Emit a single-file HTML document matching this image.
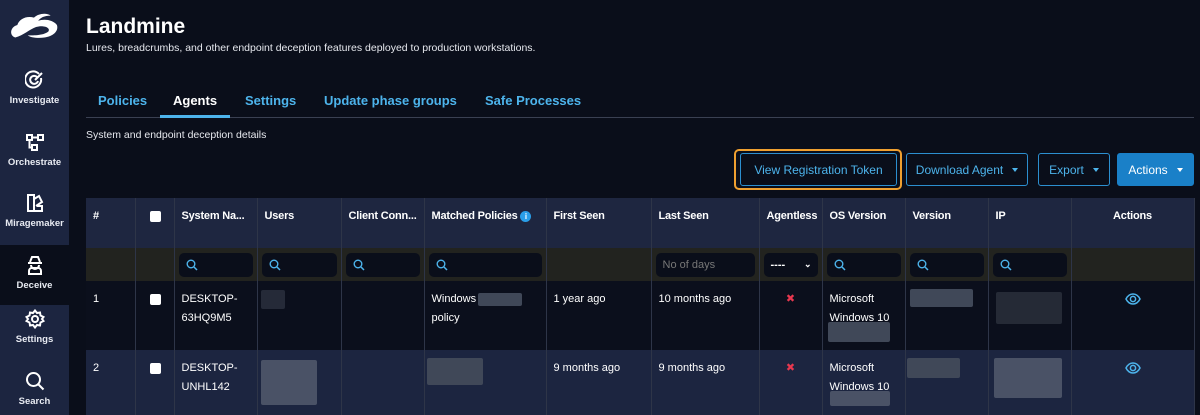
<!DOCTYPE html>
<html><head><meta charset="utf-8"><style>
*{box-sizing:border-box;margin:0;padding:0}
body{width:1200px;height:415px;overflow:hidden;background:#0a0e1a;font-family:"Liberation Sans",sans-serif;color:#fff;position:relative}
.sb{position:absolute;left:0;top:0;width:69px;height:415px;background:#1c2540}
.it{position:absolute;left:0;width:69px;text-align:center;font-size:9.5px;font-weight:bold;color:#e8ebf2}
.it svg{display:block;margin:0 auto 5px}
.sel{background:#0a0e1a}
h1{position:absolute;left:86px;top:15px;font-size:21px;font-weight:bold}
.sub{position:absolute;left:86px;top:42px;font-size:10.5px;color:#e6e8ee}
.tabs{position:absolute;left:86px;top:93px;width:1108px;height:25px;border-bottom:1px solid #3a4052}
.tab{position:absolute;top:0;font-size:13px;font-weight:bold;color:#4db4ec}
.desc{position:absolute;left:86px;top:129px;font-size:10.5px;color:#e6e8ee}
.btn{position:absolute;top:153px;height:33px;border:1.5px solid #2c8fd0;border-radius:3px;color:#4db4ec;font-size:12px;display:flex;align-items:center;justify-content:center}
.caret{display:inline-block;margin-left:9px;border-left:3.5px solid transparent;border-right:3.5px solid transparent;border-top:4px solid currentColor}
table{position:absolute;left:86px;top:198px;width:1108px;border-collapse:collapse;table-layout:fixed;font-size:11px}
td,th{border-right:1px solid #2e3548;vertical-align:top;text-align:left;padding:12px 7px 0;font-weight:bold}
th{height:50px;background:#1e2640;font-weight:bold;white-space:nowrap;overflow:hidden;letter-spacing:-0.2px}
tr.f td{height:33px;background:#22231f;padding:5px 4px 0}
tr.r1 td{height:69px;background:#0b0f1c;line-height:19px;padding-top:9px;font-weight:normal}
tr.r2 td{height:65px;background:#1c2540;line-height:19px;padding-top:9px;font-weight:normal}
.in{height:24px;background:#0a0e1a;border-radius:5px;padding:6px 0 0 7px;color:#777;font-size:11px}
.in svg{display:block}
.cb{width:11px;height:11px;background:#fff;border-radius:2px;margin:1px 0 0 7px}
.bl{background:#404858;border-radius:2px;position:absolute}
.x{color:#e8384f;text-align:center;font-weight:bold}
</style></head><body>
<svg width="0" height="0" style="position:absolute"><defs><symbol id="mg" viewBox="0 0 12 12"><circle cx="5" cy="5" r="3.8" fill="none" stroke="#4db4ec" stroke-width="1.4"/><path d="M8 8L11 11" stroke="#4db4ec" stroke-width="1.5"/></symbol><symbol id="eye" viewBox="0 0 16 12"><path d="M1 6C3 2 5.5 1 8 1S13 2 15 6C13 10 10.5 11 8 11S3 10 1 6Z" fill="none" stroke="#4db4ec" stroke-width="1.5"/><circle cx="8" cy="6" r="2.6" fill="none" stroke="#4db4ec" stroke-width="1.5"/></symbol></defs></svg>
<div class="sb">
<svg style="position:absolute;left:9px;top:11px" width="50" height="30" viewBox="0 0 48 26"><path d="M6 24 C0 22 1 14 8 12 C10 6 17 3 24 5 C28 1 36 0 40 3 C34 3 30 5 28 8 C34 6 42 7 46 12 C48 18 42 23 34 24 C28 25 20 24 18 22 C24 22 34 22 38 18 C40 14 32 12 26 14 C20 16 14 22 6 24Z" fill="#fff"/></svg>
<div class="it" style="top:70px"><svg width="20" height="20" viewBox="0 0 20 20" fill="none" stroke="#fff" stroke-width="2"><path d="M14 4A8 8 0 1 0 16 8"/><path d="M12 7A4 4 0 1 0 13 11"/><path d="M10 10L17 3"/></svg>Investigate</div>
<div class="it" style="top:132px"><svg width="20" height="20" viewBox="0 0 20 20" fill="none" stroke="#fff" stroke-width="2"><rect x="2" y="3" width="5" height="5"/><rect x="13" y="3" width="5" height="5"/><rect x="7" y="13" width="5" height="5"/><path d="M7 5.5H13M4.5 8V15.5H7"/></svg>Orchestrate</div>
<div class="it" style="top:193px"><svg width="20" height="20" viewBox="0 0 20 20" fill="none" stroke="#fff" stroke-width="2"><rect x="3" y="2" width="6" height="16"/><path d="M9 6L14 3L17 9L11 13M9 18H17V13H12"/></svg>Miragemaker</div>
<div class="it sel" style="top:245px;height:60px;padding-top:10px"><svg width="20" height="20" viewBox="0 0 20 20" fill="none" stroke="#fff" stroke-width="2"><path d="M5 7L7 2H13L15 7M3 8H17M6 10A2 2 0 0 0 14 10M4 19V16A3 3 0 0 1 7 13H13A3 3 0 0 1 16 16V19Z"/></svg>Deceive</div>
<div class="it" style="top:309px"><svg width="20" height="20" viewBox="0 0 20 20" fill="none" stroke="#fff" stroke-width="2"><circle cx="10" cy="10" r="3"/><path d="M10 1.5L12 4L15 3.5L15.5 6.5L18.5 8L17 10L18.5 12L15.5 13.5L15 16.5L12 16L10 18.5L8 16L5 16.5L4.5 13.5L1.5 12L3 10L1.5 8L4.5 6.5L5 3.5L8 4Z"/></svg>Settings</div>
<div class="it" style="top:371px"><svg width="20" height="20" viewBox="0 0 20 20" fill="none" stroke="#fff" stroke-width="2"><circle cx="8.5" cy="8.5" r="6.5"/><path d="M13 13L18.5 18.5"/></svg>Search</div>
</div>
<h1>Landmine</h1>
<div class="sub">Lures, breadcrumbs, and other endpoint deception features deployed to production workstations.</div>
<div class="tabs">
<span class="tab" style="left:12px">Policies</span>
<span class="tab" style="left:87px;color:#fff">Agents</span>
<span class="tab" style="left:159px">Settings</span>
<span class="tab" style="left:238px">Update phase groups</span>
<span class="tab" style="left:399px">Safe Processes</span>
<div style="position:absolute;left:74px;top:22px;width:70px;height:3px;background:#4db4ec"></div>
</div>
<div class="desc">System and endpoint deception details</div>
<div style="position:absolute;left:734px;top:149px;width:168px;height:41px;border:2px solid #f0a030;border-radius:5px"></div>
<div class="btn" style="left:740px;width:157px">View Registration Token</div>
<div class="btn" style="left:906px;width:122px">Download Agent<span class="caret"></span></div>
<div class="btn" style="left:1038px;width:72px">Export<span class="caret"></span></div>
<div class="btn" style="left:1117px;width:77px;background:#1a80c8;border-color:#1a80c8;color:#fff">Actions<span class="caret"></span></div>
<table>
<colgroup><col style="width:49px"><col style="width:39px"><col style="width:83px"><col style="width:84px"><col style="width:83px"><col style="width:122px"><col style="width:105px"><col style="width:108px"><col style="width:63px"><col style="width:83px"><col style="width:83px"><col style="width:83px"><col style="width:123px"></colgroup>
<tr><th>#</th><th><div class="cb"></div></th><th>System Na...</th><th>Users</th><th>Client Conn...</th><th>Matched Policies <span style="display:inline-block;width:11px;height:11px;border-radius:50%;background:#2a9ee8;font-size:8px;text-align:center;line-height:11px">i</span></th><th>First Seen</th><th>Last Seen</th><th>Agentless</th><th>OS Version</th><th>Version</th><th>IP</th><th style="text-align:center">Actions</th></tr>
<tr class="f"><td></td><td></td><td><div class="in"><svg width="12" height="12"><use href="#mg"/></svg></div></td><td><div class="in"><svg width="12" height="12"><use href="#mg"/></svg></div></td><td><div class="in"><svg width="12" height="12"><use href="#mg"/></svg></div></td><td><div class="in"><svg width="12" height="12"><use href="#mg"/></svg></div></td><td></td><td><div class="in" style="font-weight:normal">No of days</div></td><td><div class="in" style="color:#fff">----<span style="float:right;margin-right:6px;font-size:9px">⌄</span></div></td><td><div class="in"><svg width="12" height="12"><use href="#mg"/></svg></div></td><td><div class="in"><svg width="12" height="12"><use href="#mg"/></svg></div></td><td><div class="in"><svg width="12" height="12"><use href="#mg"/></svg></div></td><td></td></tr>
<tr class="r1"><td>1</td><td><div class="cb" style="margin-top:4px"></div></td><td>DESKTOP-<br>63HQ9M5</td><td></td><td></td><td>Windows<br>policy</td><td>1 year ago</td><td>10 months ago</td><td class="x">✖</td><td>Microsoft<br>Windows 10</td><td></td><td></td><td style="text-align:center"><svg width="16" height="12" style="margin-top:3px"><use href="#eye"/></svg></td></tr>
<tr class="r2"><td>2</td><td><div class="cb" style="margin-top:4px"></div></td><td>DESKTOP-<br>UNHL142</td><td></td><td></td><td></td><td>9 months ago</td><td>9 months ago</td><td class="x">✖</td><td>Microsoft<br>Windows 10</td><td></td><td></td><td style="text-align:center"><svg width="16" height="12" style="margin-top:3px"><use href="#eye"/></svg></td></tr>
</table>
<div class="bl" style="left:261px;top:290px;width:24px;height:19px;background:#252a38"></div>
<div class="bl" style="left:478px;top:293px;width:44px;height:13px"></div>
<div class="bl" style="left:828px;top:322px;width:62px;height:20px"></div>
<div class="bl" style="left:910px;top:289px;width:63px;height:18px"></div>
<div class="bl" style="left:996px;top:292px;width:66px;height:32px;background:#252a36"></div>
<div class="bl" style="left:261px;top:360px;width:56px;height:45px;background:#4a5266"></div>
<div class="bl" style="left:427px;top:358px;width:56px;height:27px"></div>
<div class="bl" style="left:830px;top:391px;width:60px;height:15px;background:#4a5266"></div>
<div class="bl" style="left:907px;top:358px;width:53px;height:20px"></div>
<div class="bl" style="left:994px;top:358px;width:68px;height:40px;background:#4a5266"></div>
</body></html>
